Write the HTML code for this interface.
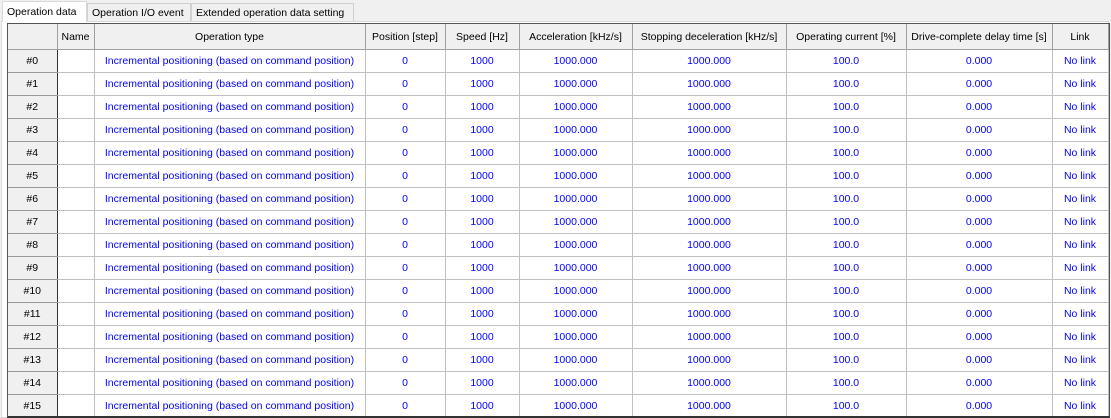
<!DOCTYPE html>
<html><head><style>
html,body{margin:0;padding:0;}
body{width:1111px;height:418px;background:#f0f0f0;position:relative;overflow:hidden;font-family:"Liberation Sans",sans-serif;font-size:10.5px;}
.tab{position:absolute;top:3px;height:18px;line-height:18px;border:1px solid #d0d0d0;border-bottom:none;background:#f0f0f0;padding:0 4px;color:#000;white-space:nowrap;box-sizing:border-box;}
.tab.sel{top:1px;height:21px;line-height:20px;background:#fff;border-color:#d9d9d9;z-index:2;}
.panel{position:absolute;left:1px;top:21px;width:1108px;height:397px;border:1px solid #d9d9d9;background:#fff;box-sizing:border-box;}
.grid{position:absolute;left:7px;top:23px;width:1103px;height:395px;border:1px solid #555;border-bottom:2px solid #333;box-sizing:border-box;background:#fff;overflow:hidden;}
table{border-collapse:collapse;table-layout:fixed;}
td{padding:0;text-align:center;white-space:nowrap;overflow:hidden;border-right:1px solid #c0c0c0;border-bottom:1px solid #c0c0c0;height:22px;color:#0000ff;}
tr.h td{background:#f0f0f0;color:#000;height:25px;border-right:1px solid #a0a0a0;border-bottom:1px solid #a0a0a0;}
td.rh{background:#f0f0f0;color:#000;border-right:1px solid #333;border-bottom:1px solid #999;}
tr.h td.rh{border-right:1px solid #a0a0a0;}
</style></head><body>
<div class="panel"></div>
<div class="tab sel" style="left:2px;width:85px;">Operation data</div>
<div class="tab" style="left:87px;width:104px;">Operation I/O event</div>
<div class="tab" style="left:191px;width:163px;">Extended operation data setting</div>
<div class="grid">
<table>
<colgroup><col style="width:49px"><col style="width:37px"><col style="width:271px"><col style="width:80px"><col style="width:74px"><col style="width:113px"><col style="width:154px"><col style="width:120px"><col style="width:146px"><col style="width:56px"></colgroup>
<tr class="h"><td class="rh"></td><td>Name</td><td>Operation type</td><td>Position [step]</td><td>Speed [Hz]</td><td>Acceleration [kHz/s]</td><td>Stopping deceleration [kHz/s]</td><td>Operating current [%]</td><td>Drive-complete delay time [s]</td><td>Link</td></tr>
<tr><td class="rh">#0</td><td></td><td>Incremental positioning (based on command position)</td><td>0</td><td>1000</td><td>1000.000</td><td>1000.000</td><td>100.0</td><td>0.000</td><td>No link</td></tr>
<tr><td class="rh">#1</td><td></td><td>Incremental positioning (based on command position)</td><td>0</td><td>1000</td><td>1000.000</td><td>1000.000</td><td>100.0</td><td>0.000</td><td>No link</td></tr>
<tr><td class="rh">#2</td><td></td><td>Incremental positioning (based on command position)</td><td>0</td><td>1000</td><td>1000.000</td><td>1000.000</td><td>100.0</td><td>0.000</td><td>No link</td></tr>
<tr><td class="rh">#3</td><td></td><td>Incremental positioning (based on command position)</td><td>0</td><td>1000</td><td>1000.000</td><td>1000.000</td><td>100.0</td><td>0.000</td><td>No link</td></tr>
<tr><td class="rh">#4</td><td></td><td>Incremental positioning (based on command position)</td><td>0</td><td>1000</td><td>1000.000</td><td>1000.000</td><td>100.0</td><td>0.000</td><td>No link</td></tr>
<tr><td class="rh">#5</td><td></td><td>Incremental positioning (based on command position)</td><td>0</td><td>1000</td><td>1000.000</td><td>1000.000</td><td>100.0</td><td>0.000</td><td>No link</td></tr>
<tr><td class="rh">#6</td><td></td><td>Incremental positioning (based on command position)</td><td>0</td><td>1000</td><td>1000.000</td><td>1000.000</td><td>100.0</td><td>0.000</td><td>No link</td></tr>
<tr><td class="rh">#7</td><td></td><td>Incremental positioning (based on command position)</td><td>0</td><td>1000</td><td>1000.000</td><td>1000.000</td><td>100.0</td><td>0.000</td><td>No link</td></tr>
<tr><td class="rh">#8</td><td></td><td>Incremental positioning (based on command position)</td><td>0</td><td>1000</td><td>1000.000</td><td>1000.000</td><td>100.0</td><td>0.000</td><td>No link</td></tr>
<tr><td class="rh">#9</td><td></td><td>Incremental positioning (based on command position)</td><td>0</td><td>1000</td><td>1000.000</td><td>1000.000</td><td>100.0</td><td>0.000</td><td>No link</td></tr>
<tr><td class="rh">#10</td><td></td><td>Incremental positioning (based on command position)</td><td>0</td><td>1000</td><td>1000.000</td><td>1000.000</td><td>100.0</td><td>0.000</td><td>No link</td></tr>
<tr><td class="rh">#11</td><td></td><td>Incremental positioning (based on command position)</td><td>0</td><td>1000</td><td>1000.000</td><td>1000.000</td><td>100.0</td><td>0.000</td><td>No link</td></tr>
<tr><td class="rh">#12</td><td></td><td>Incremental positioning (based on command position)</td><td>0</td><td>1000</td><td>1000.000</td><td>1000.000</td><td>100.0</td><td>0.000</td><td>No link</td></tr>
<tr><td class="rh">#13</td><td></td><td>Incremental positioning (based on command position)</td><td>0</td><td>1000</td><td>1000.000</td><td>1000.000</td><td>100.0</td><td>0.000</td><td>No link</td></tr>
<tr><td class="rh">#14</td><td></td><td>Incremental positioning (based on command position)</td><td>0</td><td>1000</td><td>1000.000</td><td>1000.000</td><td>100.0</td><td>0.000</td><td>No link</td></tr>
<tr><td class="rh">#15</td><td></td><td>Incremental positioning (based on command position)</td><td>0</td><td>1000</td><td>1000.000</td><td>1000.000</td><td>100.0</td><td>0.000</td><td>No link</td></tr>
</table>
</div>
</body></html>
